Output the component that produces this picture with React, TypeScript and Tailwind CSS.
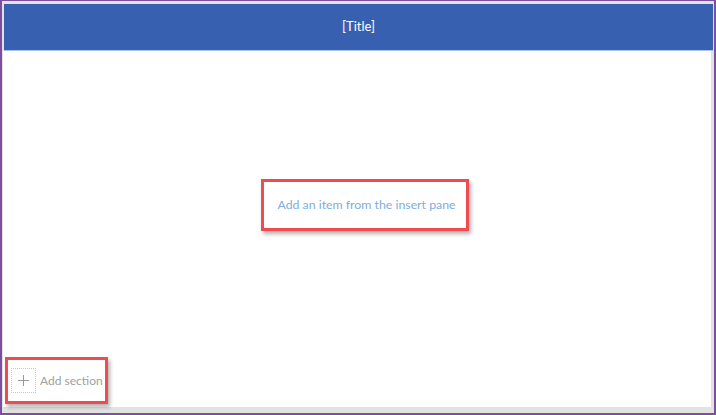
export default function App() {
  return (
    <div className="w-[716px] h-[415px] border-l-2 border-t border-r-2 border-b-2 border-[#7b4f9e] bg-[#e2e2e2] pl-px pt-[3px] pr-px pb-[6px] flex flex-col overflow-hidden" style={{ fontFamily: "Lato, 'Liberation Sans', sans-serif" }}>
      {/* Header */}
      <div className="h-[47px] shrink-0 bg-[#3761b0] border-b border-[#a8c3ea] flex items-center justify-center ml-px">
        <span className="text-[13px] text-white">[Title]</span>
      </div>

      {/* Canvas */}
      <div className="flex-1 bg-white mr-[2px] flex flex-col">
        <div className="flex-1 flex justify-center pt-[128px] pl-[15px]">
          <div className="h-[52px] w-[208px] border-[3px] border-[#ef4b50] shadow-[2px_3px_4px_rgba(0,0,0,0.3)] flex items-center pl-[14px]">
            <span className="text-[12.3px] text-[#7dade2] whitespace-nowrap">Add an item from the insert pane</span>
          </div>
        </div>

        {/* Add section */}
        <div className="pl-[2px] pb-[3px]">
          <div className="w-[103px] h-[47px] border-[3px] border-[#ef4b50] shadow-[2px_3px_4px_rgba(0,0,0,0.3)] flex items-center pl-[3px] gap-[4px]">
            <div className="w-[25px] h-[25px] border border-dotted border-[#c8c8c8] flex items-center justify-center">
              <svg width="11" height="11" viewBox="0 0 11 11">
                <path d="M5.5 0v11M0 5.5h11" stroke="#9a9a9a" strokeWidth="1" />
              </svg>
            </div>
            <span className="text-[12px] text-[#a0a0a0] whitespace-nowrap">Add section</span>
          </div>
        </div>
      </div>
    </div>
  );
}
